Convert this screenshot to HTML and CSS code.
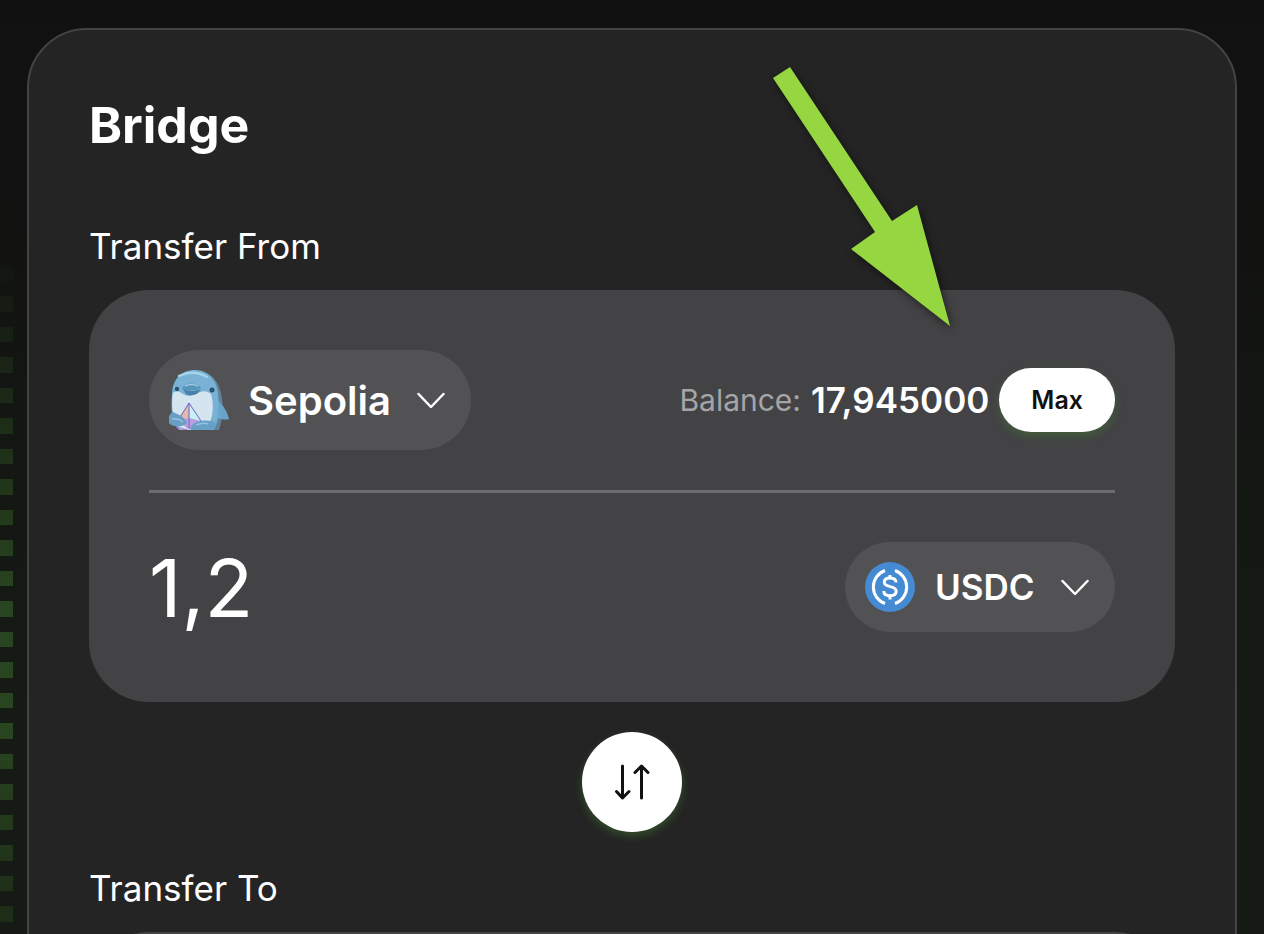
FILE: index.html
```html
<!DOCTYPE html>
<html lang="en">
<head>
    <meta charset="UTF-8">
    <meta name="viewport" content="width=device-width, initial-scale=1.0">
    <title>Bridge</title>
    <link rel="stylesheet" href="styles.css">
</head>
<body>
    <div class="backdrop"></div>

    <main class="card">
        <h1>Bridge</h1>

        <form>
            <label class="field-label" for="amount">Transfer From</label>
            <div class="panel">
                <div class="row network-row">
                    <div class="picker network">
                        <svg class="network-icon" viewBox="0 0 60 60" aria-hidden="true">
                            <path d="M46 28 Q57 36 60 49 Q52 51 43 45Z" fill="#68a3c9"/>
                            <path d="M3 25 C3 10 12 0 26 0 C40 0 48 11 49 23 C50 33 52 46 45 60 H10 C2 52 2 37 3 25Z" fill="#79b2d5"/>
                            <path d="M40 4 C50 13 53 43 43 60 H50 C57 39 54 13 40 4Z" fill="#6ba6ce" opacity=".6"/>
                            <path d="M4 23 C10 18 13 26 20 26 C28 25 34 17 42 24 C46 37 43 54 36 60 H11 C3 50 2 34 4 23Z" fill="#d4e5f0"/>
                            <path d="M10 6 Q24 -1 38 7" fill="none" stroke="#a5d3eb" stroke-width="2.5" stroke-linecap="round"/>
                            <path d="M13 19 C15 12 28 12 32 18 Q25 22 13 19Z" fill="#5696bb"/>
                            <path d="M16 16 Q22 13 29 16" fill="none" stroke="#9bcae1" stroke-width="1.5"/>
                            <path d="M14 19 Q23 23 32 19 Q27 28 17 24Z" fill="#4a80a8"/>
                            <circle cx="8" cy="19" r="2.2" fill="#29546f"/>
                            <circle cx="43" cy="20" r="2.5" fill="#29546f"/>
                            <path d="M20 33 L9 50 L20 58Z" fill="#e3b9ad"/>
                            <path d="M20 33 L32 51 L20 58Z" fill="#c7f0f5"/>
                            <path d="M9 50 L20 48 L32 51 L20 60Z" fill="#bc9ee0"/>
                            <path d="M20 33 L8 52 M20 33 L32 51 M20 33 V58" fill="none" stroke="#6b62cc" stroke-width="1"/>
                            <path d="M4 42 C7 44 15 45 18 53 C14 58 3 57 0 53 C-2 49 0 44 4 42Z" fill="#699fc5"/>
                            <path d="M21 58 C26 50 34 50 43 51 C49 53 47 58 43 60 H22Z" fill="#689fc6"/>
                            <path d="M3 49 Q9 48 14 52 M27 55 Q34 52 39 54" fill="none" stroke="#91c2df" stroke-width="1.5"/>
                            <path d="M7 57 L12 60 H18 L8 57Z" fill="#ddc7f2" stroke="#7967bd" stroke-width=".7"/>
                        </svg>
                        <select id="network" aria-label="Network">
                            <option>Sepolia</option>
                        </select>
                        <svg class="chevron" viewBox="0 0 28 16" aria-hidden="true">
                            <path d="M1.5 2 L14 15 L26.500 2"/>
                        </svg>
                    </div>
                    <div class="balance">
                        <span class="balance-label">Balance:</span>
                        <strong>17,945000</strong>
                        <button type="button" class="max">Max</button>
                    </div>
                </div>
                <div class="row amount-row">
                    <input type="text" id="amount" inputmode="decimal" value="1,2">
                    <div class="picker token">
                        <svg class="token-icon" viewBox="0 0 50 50" aria-hidden="true">
                            <circle cx="25" cy="25" r="25" fill="#458bd3"/>
                            <g fill="none" stroke="#fff" stroke-width="3">
                                <path d="M20 8.500 A17.500 17.500 0 0 0 20 41.500 M30 8.500 A17.500 17.500 0 0 1 30 41.500"/>
                                <path d="M25 13 V17 M25 33 V37.500"/>
                                <path d="M31 20.500 C31 17.500 28.500 16 25 16 C21.500 16 19.300 17.700 19.300 20.300 C19.300 26.500 31.200 22.700 31.200 29.300 C31.200 32.200 28.700 33.700 25 33.700 C21.300 33.700 18.800 32 18.800 29"/>
                            </g>
                        </svg>
                        <select id="token" aria-label="Token">
                            <option>USDC</option>
                        </select>
                        <svg class="chevron" viewBox="0 0 28 16" aria-hidden="true">
                            <path d="M1.5 2 L14 15 L26.500 2"/>
                        </svg>
                    </div>
                </div>
            </div>

            <button type="button" class="swap" aria-label="Swap direction">
                <svg viewBox="0 0 36 36" aria-hidden="true">
                    <path d="M8.500 2 V34 M2.500 27.500 L8.500 34 L15 27.500 M27.500 34 V2 M21 8.500 L27.500 2 L34 8.500"/>
                </svg>
            </button>

            <div class="field-label">Transfer To</div>
            <div class="panel"></div>
        </form>
    </main>

    <svg class="pointer" viewBox="0 0 180 262" aria-hidden="true">
        <path d="M3 11 L20 0 L122 154 L147 138 L180 259 L81 182 L105 165Z"/>
    </svg>
</body>
</html>
```
FILE: styles.css
```css
* {
    box-sizing: border-box;
}
body {
    position: relative;
    height: 100vh;
    margin: 0;
    padding: 28px 27px 0;
    overflow: hidden;
    background: linear-gradient(#111 0, #121311 25%, #151b14 75%, #151a14 100%);
    color: #fff;
    font-family: Inter, sans-serif;
}
/* column of green blocks fading in at the window edge */
.backdrop {
    position: absolute;
    top: 266px;
    bottom: 0;
    left: 0;
    width: 13px;
    background: repeating-linear-gradient(#29451f 0 15px, transparent 15px 30px, #29451f 30px 46px, transparent 46px 61px);
    mask-image: linear-gradient(rgba(0,0,0,0.06), rgba(0,0,0,0.7) 35%, #000 50%, #000 70%, rgba(0,0,0,0.4));
}
.card {
    position: relative;
    padding: 60px;
    border: 2px solid #434343;
    border-radius: 60px;
    background-color: #242424;
}
h1 {
    margin: 0 0 64px;
    font-size: 50px;
    font-weight: 700;
    line-height: 70px;
}
.field-label {
    display: block;
    margin-bottom: 22px;
    font-size: 35px;
    line-height: 44px;
}
.panel {
    min-height: 412px;
    padding: 60px 60px 70px;
    border-radius: 60px;
    background-color: #434345;
}
.row {
    display: flex;
    align-items: center;
    justify-content: space-between;
}
.network-row {
    padding-bottom: 40px;
    border-bottom: 3px solid #6b6c6e;
}
.amount-row {
    padding-top: 49px;
}
.picker {
    position: relative;
    display: flex;
    align-items: center;
    border-radius: 50px;
    background-color: #525254;
}
.picker svg {
    position: absolute;
    pointer-events: none;
}
.picker select {
    width: 100%;
    height: 100%;
    padding: 0;
    border: none;
    border-radius: 50px;
    background: none;
    color: #fff;
    font-family: inherit;
    font-weight: 600;
    appearance: none;
    cursor: pointer;
}
.network {
    width: 322px;
    height: 100px;
}
.network select {
    padding-left: 99px;
    font-size: 40px;
}
.network-icon {
    left: 20px;
    width: 60px;
    height: 60px;
}
.token {
    width: 270px;
    height: 90px;
}
.token select {
    padding-left: 90px;
    font-size: 35px;
}
.token-icon {
    left: 20px;
    width: 50px;
    height: 50px;
}
.chevron {
    right: 26px;
    width: 28px;
    height: 16px;
    fill: none;
    stroke: #fff;
    stroke-width: 2.5;
    stroke-linecap: round;
    stroke-linejoin: round;
}
.balance {
    display: flex;
    align-items: center;
    gap: 10px;
    font-size: 35px;
}
.balance strong {
    font-weight: 600;
}
.balance-label {
    color: #a5a5a7;
    font-size: 30px;
}
button {
    border: none;
    background-color: #fff;
    color: #111;
    font-family: inherit;
    box-shadow: 0 4px 8px rgba(66,120,48,0.5);
    cursor: pointer;
}
.max {
    height: 64px;
    padding: 0 32px;
    border-radius: 32px;
    font-size: 25px;
    font-weight: 600;
}
#amount {
    flex: 1;
    min-width: 0;
    height: 90px;
    padding: 0;
    border: none;
    outline: none;
    background: none;
    color: #fff;
    font-family: inherit;
    font-size: 80px;
}
.swap {
    display: flex;
    align-items: center;
    justify-content: center;
    width: 100px;
    height: 100px;
    margin: 30px auto 34px;
    padding: 0;
    border-radius: 50%;
}
.swap svg {
    width: 36px;
    height: 36px;
    fill: none;
    stroke: #111;
    stroke-width: 3;
    stroke-linecap: round;
    stroke-linejoin: round;
}
/* callout arrow aimed at the Max button */
.pointer {
    position: absolute;
    top: 67px;
    right: 314px;
    width: 180px;
    height: 262px;
    overflow: visible;
    fill: #96d741;
    filter: drop-shadow(2px 3px 4px rgba(0,0,0,0.5));
    pointer-events: none;
}
```
